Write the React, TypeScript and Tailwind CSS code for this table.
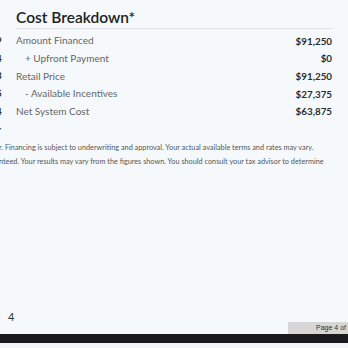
import React from "react";

type T_Row = {
  label: string;
  value: string;
  indent?: boolean;
};

const rows: T_Row[] = [
  { label: "Amount Financed", value: "$91,250" },
  { label: "+ Upfront Payment", value: "$0", indent: true },
  { label: "Retail Price", value: "$91,250" },
  { label: "- Available Incentives", value: "$27,375", indent: true },
  { label: "Net System Cost", value: "$63,875" },
];

// leftovers of the previous column, cut by the page edge
const edge = ["9", "4", "3", "5", "4", ">"];

const App: React.FunctionComponent = () => {
  return (
    <div
      className="w-[348px] h-[348px] overflow-hidden bg-[#f5f9fc] flex flex-col relative"
      style={{ fontFamily: "Lato, 'Open Sans', sans-serif" }}
    >
      <div className="flex">
        {/* clipped column */}
        <div className="w-[16px] shrink-0 overflow-hidden pt-[33px]">
          {edge.map((c, i) => (
            <div
              key={i}
              className="h-[17.7px] -ml-[4px] text-[10px] font-bold text-[#333] leading-[14px]"
            >
              {c}
            </div>
          ))}
        </div>

        <div className="flex-1 pr-[16px]">
          <h2 className="pt-[7px] h-[29px] text-[15.5px] font-semibold text-[#222] leading-[20px] border-b border-[#dfe3e8]">
            Cost Breakdown*
          </h2>

          <div className="pt-[3px]">
            {rows.map((r, i) => (
              <div
                key={i}
                className="h-[17.7px] flex items-center justify-between text-[10px]"
              >
                <span
                  className={
                    "text-[#666] " + (r.indent ? "pl-[9px]" : "")
                  }
                >
                  {r.label}
                </span>
                <span className="font-bold text-[#2b2b2b] text-[9.8px]">{r.value}</span>
              </div>
            ))}
          </div>
        </div>
      </div>

      <div className="mt-[2px] -ml-[1px] text-[7.3px] text-[#555] leading-[14px] whitespace-nowrap">
        <p>
          r. Financing is subject to underwriting and approval. Your actual
          available terms and rates may vary.
        </p>
        <p>
          nteed. Your results may vary from the figures shown. You should
          consult your tax advisor to determine
        </p>
      </div>

      <div className="flex-1" />

      <div className="pl-[8px] text-[11px] text-[#333] leading-[14px] mb-[-2px]">
        4
      </div>

      <div className="flex justify-end">
        <div
          className="w-[60px] h-[12px] bg-[#d6d6d6] pl-[28px] text-[7px] text-[#333] leading-[12px] whitespace-nowrap overflow-hidden"
          style={{ fontFamily: "'Liberation Sans', Arial, sans-serif" }}
        >
          Page 4 of 4
        </div>
      </div>
      <div className="h-[9px] bg-[#1b1b1b]" />
      <div className="h-[5px] bg-[#f3f6f9]" />
    </div>
  );
};

export default App;
